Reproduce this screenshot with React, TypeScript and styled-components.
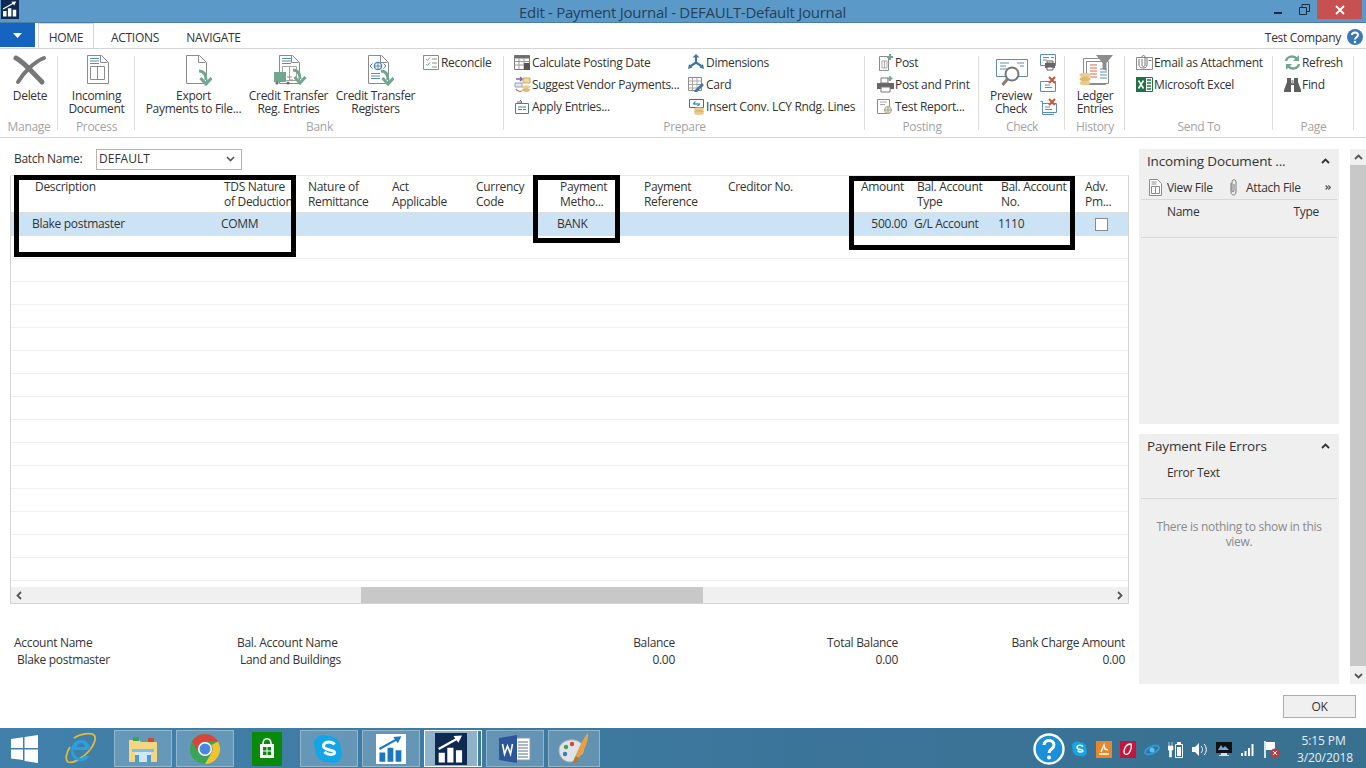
import React from 'react'
import styled, { createGlobalStyle } from 'styled-components'

const GlobalStyle = createGlobalStyle`
  html, body {
    margin: 0;
    padding: 0;
    background: #fff;
    overflow: hidden;
  }
  * {
    box-sizing: border-box;
  }
`

const Screen = styled.div`
  position: relative;
  width: 1366px;
  height: 768px;
  display: flex;
  flex-direction: column;
  overflow: hidden;
  background: #fff;
  color: #333;
  font-family: 'Open Sans', 'Noto Sans', sans-serif;
  font-size: 12px;
  letter-spacing: -0.3px;
`

/* title bar */
const TitleBar = styled.div`
  position: relative;
  height: 23px;
  flex: none;
  display: flex;
  align-items: flex-start;
  justify-content: space-between;
  background: #5b9ac8;
  border-bottom: 1px solid #4a7ea6;
`

const AppBadge = styled.div`
  width: 18px;
  height: 19px;
  margin: 0 0 0 1px;
  background: #0f2a52;
  display: flex;
`

const TitleText = styled.div`
  flex: 1;
  padding: 2px 0 0 0;
  margin-left: 81px;
  text-align: center;
  font-size: 15px;
  line-height: 20px;
  color: #25405a;
  letter-spacing: -0.27px;
`

const WindowButtons = styled.div`
  display: flex;
  align-items: flex-start;
  margin-right: 4px;
`

const WindowButton = styled.div<{ $close?: boolean }>`
  width: ${(p) => (p.$close ? '45px' : '26px')};
  height: 19px;
  display: flex;
  align-items: center;
  justify-content: center;
  background: ${(p) => (p.$close ? '#c75050' : 'transparent')};
`

/* tabs */
const TabBar = styled.div`
  height: 25px;
  flex: none;
  display: flex;
  align-items: flex-end;
  background: #fff;
`

const FileButton = styled.div`
  width: 35px;
  height: 24px;
  margin-bottom: 1px;
  background: #1565c0;
  display: flex;
  align-items: center;
  justify-content: center;
`

const Tab = styled.div<{ $active?: boolean; $w: number }>`
  width: ${(p) => p.$w}px;
  height: 25px;
  text-align: center;
  line-height: 27px;
  color: #333;
  background: #fff;
  border: 1px solid ${(p) => (p.$active ? '#d4d4d4' : 'transparent')};
  border-bottom: none;
  position: relative;
  z-index: 1;
`

const TabSpacer = styled.div`
  width: 3px;
`

const CompanyArea = styled.div`
  margin-left: auto;
  height: 25px;
  display: flex;
  align-items: center;
  gap: 6px;
  padding: 3px 3px 0 0;
`

/* ribbon */
const Ribbon = styled.div`
  height: 90px;
  flex: none;
  display: flex;
  border-top: 1px solid #d4d4d4;
  border-bottom: 1px solid #d4d4d4;
`

const Group = styled.div<{ $w: number }>`
  position: relative;
  width: ${(p) => p.$w}px;
  flex: none;
  display: flex;
  flex-direction: column;
  &::after {
    content: '';
    position: absolute;
    right: 0;
    top: 7px;
    bottom: 7px;
    width: 1px;
    background: #dcdcdc;
  }
`

const GroupBody = styled.div<{ $pad?: number; $gap?: number }>`
  height: 65px;
  flex: none;
  display: flex;
  justify-content: ${(p) => (p.$pad === undefined ? 'center' : 'flex-start')};
  padding-left: ${(p) => p.$pad ?? 0}px;
  gap: ${(p) => p.$gap ?? 0}px;
`

const GroupLabel = styled.div`
  height: 23px;
  flex: none;
  text-align: center;
  color: #a3a3a3;
  line-height: 14px;
  padding-top: 6px;
`

const LargeButton = styled.div<{ $w: number }>`
  width: ${(p) => p.$w}px;
  flex: none;
  padding-top: 3px;
  display: flex;
  flex-direction: column;
  align-items: center;
`

const LargeIcon = styled.svg`
  width: 36px;
  height: 36px;
  flex: none;
  margin-bottom: 1px;
`

const LargeText = styled.div`
  text-align: center;
  line-height: 13px;
  white-space: nowrap;
`

const SmallColumn = styled.div<{ $w?: number }>`
  width: ${(p) => (p.$w ? `${p.$w}px` : 'auto')};
  flex: none;
  padding-top: 3px;
  display: flex;
  flex-direction: column;
`

const SmallItem = styled.div`
  height: 22px;
  flex: none;
  display: flex;
  align-items: center;
  gap: 1px;
  white-space: nowrap;
  line-height: 20px;
  padding-bottom: 1px;
`

const SmallIcon = styled.svg`
  width: 17px;
  height: 17px;
  flex: none;
`

/* workspace */
const Workspace = styled.div`
  flex: 1;
  display: flex;
  flex-direction: column;
  padding-top: 11px;
`

const MainRow = styled.div`
  height: 535px;
  flex: none;
  display: flex;
  padding-left: 10px;
`

const JournalColumn = styled.div`
  width: 1119px;
  flex: none;
`

const BatchRow = styled.div`
  height: 21px;
  display: flex;
  align-items: center;
  margin-bottom: 5px;
  padding-left: 4px;
`

const BatchLabel = styled.div`
  width: 82px;
  padding-bottom: 2px;
`

const BatchSelect = styled.div`
  width: 146px;
  height: 21px;
  border: 1px solid #b4b4b4;
  padding: 0 6px 2px 2px;
  display: flex;
  align-items: center;
  justify-content: space-between;
  letter-spacing: 0;
`

const GridFrame = styled.div`
  height: 429px;
  border: 1px solid #d4d4d4;
  border-top-color: #e8e8e8;
  display: flex;
  flex-direction: column;
`

const columns = '209px 84px 84px 84px 84px 84px 84px 84px 105px 84px 84px 1fr'

const HeaderRow = styled.div`
  height: 37px;
  flex: none;
  display: grid;
  grid-template-columns: ${columns};
  border-bottom: 1px solid #dedede;
`

const HeaderCell = styled.div<{ $right?: boolean; $pad?: number }>`
  padding: 3px ${(p) => (p.$right ? '9px' : '0')} 0 ${(p) => p.$pad ?? 4}px;
  line-height: 15px;
  white-space: pre;
  text-align: ${(p) => (p.$right ? 'right' : 'left')};
`

const DataRow = styled.div<{ $selected?: boolean }>`
  height: 23px;
  flex: none;
  display: grid;
  grid-template-columns: ${columns};
  background: ${(p) => (p.$selected ? '#cce3f5' : '#fff')};
  border-bottom: 1px solid ${(p) => (p.$selected ? '#cce3f5' : '#efefef')};
`

const DataCell = styled.div<{ $right?: boolean; $pad?: number }>`
  padding: 0 ${(p) => (p.$right ? '6px' : '0')} 0 ${(p) => p.$pad ?? 1}px;
  line-height: 22px;
  white-space: nowrap;
  text-align: ${(p) => (p.$right ? 'right' : 'left')};
`

const CheckBox = styled.div`
  width: 13px;
  height: 13px;
  margin: 5px 0 0 14px;
  background: #fff;
  border: 1px solid #8a8a8a;
`

const HScroll = styled.div`
  height: 16px;
  margin-top: auto;
  flex: none;
  display: flex;
  align-items: center;
  justify-content: space-between;
  background: #f0f0f0;
  padding: 0 4px;
  position: relative;
`

const HThumb = styled.div`
  position: absolute;
  left: 350px;
  top: 0;
  width: 342px;
  height: 16px;
  background: #c8c8c8;
`

const TotalsRow = styled.div`
  margin: 30px 0 0 4px;
  width: 1111px;
  display: grid;
  grid-template-columns: 223px 200px 238px 223px 227px;
  line-height: 17px;
`

const TotalLabel = styled.div<{ $right?: boolean }>`
  text-align: ${(p) => (p.$right ? 'right' : 'left')};
  white-space: nowrap;
`

const TotalValue = styled.div<{ $right?: boolean }>`
  text-align: ${(p) => (p.$right ? 'right' : 'left')};
  padding-left: ${(p) => (p.$right ? '0' : '3px')};
  white-space: nowrap;
`

const SideColumn = styled.div`
  width: 200px;
  flex: none;
  margin-left: 10px;
  display: flex;
  flex-direction: column;
  gap: 10px;
`

const FactBox = styled.div<{ $h: number }>`
  height: ${(p) => p.$h}px;
  flex: none;
  background: #efefef;
  display: flex;
  flex-direction: column;
`

const FactTitle = styled.div`
  height: 25px;
  flex: none;
  padding: 0 9px 1px 8px;
  display: flex;
  align-items: center;
  justify-content: space-between;
  font-size: 13.5px;
  letter-spacing: -0.15px;
`

const FactToolbar = styled.div`
  height: 26px;
  flex: none;
  margin: 0 2px;
  padding: 1px 6px 0 6px;
  display: flex;
  align-items: center;
  border-bottom: 1px solid #d8d8d8;
`

const ToolItem = styled.div<{ $gap: number; $w: number }>`
  width: ${(p) => p.$w}px;
  flex: none;
  display: flex;
  align-items: center;
  gap: ${(p) => p.$gap}px;
`

const FactColumns = styled.div<{ $h: number; $top: number }>`
  height: ${(p) => p.$h}px;
  flex: none;
  margin: 0 2px;
  padding: ${(p) => p.$top}px 18px 0 26px;
  display: flex;
  justify-content: space-between;
  line-height: 16px;
  border-bottom: 1px solid #d8d8d8;
`

const EmptyNote = styled.div`
  padding: 20px 12px 0;
  text-align: center;
  line-height: 15px;
  color: #8a8a8a;
`

const VScroll = styled.div`
  width: 16px;
  flex: none;
  margin-left: 11px;
  background: #f0f0f0;
  display: flex;
  flex-direction: column;
  align-items: center;
  justify-content: space-between;
  position: relative;
  padding: 4px 0;
`

const VThumb = styled.div`
  position: absolute;
  left: 0;
  top: 16px;
  bottom: 18px;
  width: 16px;
  background: #c8c8c8;
`

const ActionBar = styled.div`
  display: flex;
  justify-content: flex-end;
  padding: 11px 10px 0 0;
`

const OkButton = styled.div`
  width: 73px;
  height: 23px;
  background: #f0f0f0;
  border: 1px solid #adadad;
  text-align: center;
  line-height: 21px;
`

/* taskbar */
const Taskbar = styled.div`
  height: 40px;
  flex: none;
  display: flex;
  align-items: stretch;
  justify-content: space-between;
  padding-top: 2px;
  background: linear-gradient(90deg, #4080aa 0%, #3f7ca3 30%, #3b7499 60%, #38708f 100%);
  color: #e6eef4;
`

const TaskStrip = styled.div`
  display: flex;
  gap: 4px;
`

const TaskSlot = styled.div<{ $w?: number; $tile?: boolean; $active?: boolean }>`
  width: ${(p) => p.$w ?? 58}px;
  height: 37px;
  display: flex;
  align-items: center;
  justify-content: center;
  background: ${(p) =>
    p.$active ? 'rgba(255,255,255,0.42)' : p.$tile ? 'rgba(255,255,255,0.2)' : 'transparent'};
  border: 1px solid
    ${(p) => (p.$active ? 'rgba(255,255,255,0.9)' : p.$tile ? 'rgba(255,255,255,0.3)' : 'transparent')};
`

const TaskGhost = styled.div`
  width: 4px;
  height: 37px;
  margin-left: -4px;
  border: 1px solid rgba(255, 255, 255, 0.9);
  border-left: none;
`

const Tray = styled.div`
  display: flex;
  align-items: center;
  padding-right: 16px;
`

const TrayIcons = styled.div`
  display: flex;
  align-items: center;
  gap: 8px;
  margin: 0 17px 0 7px;
`

const Clock = styled.div`
  width: 53px;
  text-align: center;
  line-height: 17px;
  letter-spacing: -0.1px;
`

const Annotation = styled.div<{ $x: number; $y: number; $w: number; $h: number }>`
  position: absolute;
  left: ${(p) => p.$x}px;
  top: ${(p) => p.$y}px;
  width: ${(p) => p.$w}px;
  height: ${(p) => p.$h}px;
  border: 5px solid #000;
  pointer-events: none;
`

/* drawn icons */
const PageOutline = ({ x, y, w = 20, h = 28 }: { x: number; y: number; w?: number; h?: number }) => (
  <path
    d={`M${x + 0.5} ${y + 0.5}h${w - 7}l7 7v${h - 7}h-${w}z M${x + w - 7.5} ${y + 0.5}v7h7`}
    fill="#fff"
    stroke="#8b8b8b"
  />
)

const GreenArrow = ({ x, y }: { x: number; y: number }) => (
  <g fill="none" stroke="#6fa78f" strokeWidth="3">
    <path d={`M${x} ${y}c5 0 7 3 7 9`} />
    <path d={`M${x + 1.5} ${y + 7}l5.5 6 5.5-6`} />
  </g>
)

const DocLines = ({ x, y, n = 3, w = 9 }: { x: number; y: number; n?: number; w?: number }) => (
  <g stroke="#5b8db8">
    {Array.from({ length: n }).map((_, i) => (
      <path key={i} d={`M${x} ${y + i * 2.5 + 0.5}h${w}`} />
    ))}
  </g>
)

const DeleteIcon = () => (
  <LargeIcon viewBox="0 0 36 36">
    <path d="M4 6c8 4 18 16 26 24" fill="none" stroke="#777" strokeWidth="5" strokeLinecap="round" />
    <path d="M32 6C22 10 12 20 6 30" fill="none" stroke="#777" strokeWidth="4" strokeLinecap="round" />
  </LargeIcon>
)

const IncomingIcon = () => (
  <LargeIcon viewBox="0 0 36 36">
    <PageOutline x={8} y={3} w={21} h={28} />
    <DocLines x={11} y={6} n={3} w={9} />
    <path d="M11.5 14.5h14v13h-14z M18.5 14.5v13" fill="none" stroke="#8b8b8b" />
  </LargeIcon>
)

const ExportIcon = () => (
  <LargeIcon viewBox="0 0 36 36">
    <PageOutline x={10} y={3} w={20} h={28} />
    <GreenArrow x={23} y={19} />
  </LargeIcon>
)

const CreditEntriesIcon = () => (
  <LargeIcon viewBox="0 0 36 36">
    <PageOutline x={8} y={3} w={20} h={28} />
    <DocLines x={11} y={6} n={3} w={9} />
    <path d="M11.5 14.5h14v14h-14z M18.5 14.5v14" fill="none" stroke="#a5a5a5" />
    <path d="M3 20h12v10H3z" fill="#6fa78f" />
    <circle cx="6" cy="31" r="1.6" fill="#6e6e6e" />
    <circle cx="17" cy="31" r="1.6" fill="#6e6e6e" />
    <path d="M16 25h5M18 28h4" stroke="#8b8b8b" />
    <GreenArrow x={22} y={18} />
  </LargeIcon>
)

const CreditRegistersIcon = () => (
  <LargeIcon viewBox="0 0 36 36">
    <PageOutline x={10} y={3} w={20} h={28} />
    <circle cx="20" cy="14" r="3.6" fill="#fff" stroke="#4a86b8" strokeWidth="1.4" />
    <path d="M16.5 14h7M20 10.5v7" stroke="#4a86b8" />
    <path d="M14.5 11.5l-2.5 2.5 2.5 2.5M25.5 11.5l2.5 2.5-2.5 2.5" fill="none" stroke="#5b7fa0" />
    <DocLines x={13} y={21} n={3} w={9} />
    <GreenArrow x={23} y={19} />
  </LargeIcon>
)

const PreviewCheckIcon = () => (
  <LargeIcon viewBox="0 0 36 36">
    <path d="M3.5 7.5h31v17h-31z" fill="#fff" stroke="#5b8db8" />
    <path d="M7 11h9M7 14h6M7 17h7M24 11h7M27 14h4" stroke="#5b8db8" />
    <circle cx="19" cy="22" r="6.5" fill="#fff" stroke="#777" strokeWidth="2" />
    <path d="M14.5 27l-5 6" stroke="#8a7d68" strokeWidth="3" />
  </LargeIcon>
)

const LedgerIcon = () => (
  <LargeIcon viewBox="0 0 36 36">
    <path d="M6.5 6.5h22v26h-22z" fill="#fff" stroke="#8b8b8b" />
    <path d="M9.5 9.5h22v22h-22z" fill="#fff" stroke="#8b8b8b" />
    <path d="M13 13h7M13 16h7M13 19h7M13 22h7M13 25h7" stroke="#cf6f4c" />
    <path d="M23 17h7M23 20h7M23 23h7M23 26h7" stroke="#5b8db8" />
    <path d="M19 3h17l-6.5 8v8l-4-2v-6z" fill="#8d8d8d" />
    <ellipse cx="8" cy="23" rx="5.5" ry="2.3" fill="#e8cb8d" />
    <ellipse cx="8" cy="27" rx="5.5" ry="2.3" fill="#dcb970" />
    <ellipse cx="8" cy="31" rx="5.5" ry="2.3" fill="#e8cb8d" />
  </LargeIcon>
)

const ReconcileIcon = () => (
  <SmallIcon viewBox="0 0 17 17">
    <path d="M.5 1.5h15v14H.5z" fill="#fff" stroke="#8b8b8b" />
    <path d="M3 5l1.5 1.5L7 3.5M3 10l1.5 1.5L7 8.5" fill="none" stroke="#6fa78f" />
    <path d="M9 5h5M9 9h5M9 13h5" stroke="#8b8b8b" />
  </SmallIcon>
)

const CalendarIcon = () => (
  <SmallIcon viewBox="0 0 17 17">
    <path d="M.5 1.5h15v14H.5z" fill="#fff" stroke="#7a7a7a" />
    <path d="M.5 1.5h15v3H.5z" fill="#6e6e6e" />
    <path d="M.5 7.5h15M.5 11h15M5 4v11M10 4v11" stroke="#9a9a9a" />
    <path d="M10 9h6v7h-6z" fill="#555" />
  </SmallIcon>
)

const SuggestIcon = () => (
  <SmallIcon viewBox="0 0 17 17">
    <path d="M2 3h6M6 1l2.5 2L6 5" fill="none" stroke="#8a5fa8" strokeWidth="1.3" />
    <path d="M9 2h7v5H9z" fill="#f0d8a4" stroke="#c8a868" />
    <path d="M1 7h7v4H1z" fill="#dfe7ef" stroke="#8aa7c2" />
    <ellipse cx="12" cy="11" rx="4" ry="1.8" fill="#e8cb8d" />
    <ellipse cx="12" cy="14" rx="4" ry="1.8" fill="#dcb970" />
    <path d="M2 13c1 2 3 3 6 2" fill="none" stroke="#cf6f4c" strokeWidth="1.3" />
  </SmallIcon>
)

const ApplyIcon = () => (
  <SmallIcon viewBox="0 0 17 17">
    <path d="M1.5 5.5h13v10h-13z" fill="#fff" stroke="#4c7f9f" />
    <path d="M4 9h8M4 11.5h4M9 11.5h3" stroke="#4c7f9f" />
    <path d="M3 4h5M6 2l2 2-2 2" fill="none" stroke="#6e6e6e" />
  </SmallIcon>
)

const DimensionsIcon = () => (
  <SmallIcon viewBox="0 0 17 17">
    <path d="M8 8.5V2M8 8.5l-6 4M8 8.5l6 4" stroke="#3f78a8" strokeWidth="2.2" />
    <path d="M8 0l3.5 3.5h-7zM0 15l1-5 3.5 3.5zM16 15l-1-5-3.5 3.5z" fill="#3f78a8" />
  </SmallIcon>
)

const CardIcon = () => (
  <SmallIcon viewBox="0 0 17 17">
    <path d="M.5 1.5h13v13H.5z" fill="#fff" stroke="#8b8b8b" />
    <path d="M.5 5h13M.5 8.5h13M.5 12h13M4.5 2v12M9 2v12" stroke="#a8a8a8" />
    <path d="M7 14l7-7 2 2-7 7H6z" fill="#3f78a8" />
  </SmallIcon>
)

const ConvIcon = () => (
  <SmallIcon viewBox="0 0 17 17">
    <path d="M1.5 1.5h14v8h-14z" fill="#fff" stroke="#3f6f94" />
    <path d="M5 6h7M5 6l2.5-2.5M12 6L9.5 8" fill="none" stroke="#3f9ac0" strokeWidth="1.3" />
    <ellipse cx="11" cy="11" rx="5" ry="1.8" fill="#e8cb8d" />
    <ellipse cx="11" cy="13.5" rx="5" ry="1.8" fill="#dcb970" />
    <ellipse cx="11" cy="15.5" rx="5" ry="1.4" fill="#e8cb8d" />
  </SmallIcon>
)

const PostIcon = () => (
  <SmallIcon viewBox="0 0 17 17">
    <path d="M2.5 2.5h9v14h-9z" fill="#fff" stroke="#8b8b8b" />
    <path d="M5 7h5v7H5zM7.5 7v7" fill="none" stroke="#a8a8a8" />
    <path d="M13 0v6M10 3h6" stroke="#6fa78f" strokeWidth="2" />
  </SmallIcon>
)

const PostPrintIcon = () => (
  <SmallIcon viewBox="0 0 17 17">
    <path d="M0 7h17v6H0z" fill="#666" />
    <path d="M4 2h7v5H4zM4 11h9v5H4z" fill="#fff" stroke="#777" />
    <path d="M13 0v5M10.5 2.5h5" stroke="#6fa78f" strokeWidth="1.8" />
  </SmallIcon>
)

const TestReportIcon = () => (
  <SmallIcon viewBox="0 0 17 17">
    <path d="M.5 1.5h12v14H.5z" fill="#fff" stroke="#8b8b8b" />
    <path d="M3 4h7M3 6.5h5" stroke="#a8a8a8" />
    <circle cx="11" cy="12" r="3.5" fill="#f4e4c0" stroke="#c8a868" />
    <path d="M11 8v8M7 12h8" stroke="#8aa7c2" />
  </SmallIcon>
)

const CheckPrintIcon = () => (
  <SmallIcon viewBox="0 0 17 17">
    <path d="M.5 .5h15v11H.5z" fill="#fff" stroke="#5b8db8" />
    <path d="M3 3.5h6M3 6h4M11 3.5h3" stroke="#5b8db8" />
    <path d="M5 9h10v5H5z" fill="#666" />
    <path d="M7 7h6v2H7zM7 13h6v3H7z" fill="#fff" stroke="#666" />
  </SmallIcon>
)

const CheckVoidIcon = ({ stacked }: { stacked?: boolean }) => (
  <SmallIcon viewBox="0 0 17 17">
    {stacked && <path d="M.5 3.5h2v13h11v-1" fill="none" stroke="#5b8db8" />}
    <path d={stacked ? 'M2.5 5.5h14v9h-14z' : 'M.5 5.5h15v10H.5z'} fill="#fff" stroke="#5b8db8" />
    <path d="M5 9h5M5 11.5h7" stroke="#5b8db8" />
    <path d="M9 1l6 6M15 1L9 7" stroke="#c9573a" strokeWidth="2" />
  </SmallIcon>
)

const AttachmentIcon = () => (
  <SmallIcon viewBox="0 0 17 17">
    <path d="M.5 3.5h16v12H.5z" fill="#fff" stroke="#8b8b8b" />
    <path d="M6 5v6c0 2 3 2 3 0V3c0-2-3-2-3 0M3 5v6c0 4 8 4 8 0V4" fill="none" stroke="#777" />
    <path d="M12.5 6.5h3" stroke="#777" />
  </SmallIcon>
)

const ExcelIcon = () => (
  <SmallIcon viewBox="0 0 17 17">
    <path d="M8 1.5h8.5v14H8z" fill="#fff" stroke="#1f7244" />
    <path d="M11 4h4M11 7h4M11 10h4M11 13h4" stroke="#1f7244" strokeWidth="1.5" />
    <path d="M0 1h10v15H0z" fill="#1f7244" />
    <path d="M2.5 4.5l5 8M7.5 4.5l-5 8" stroke="#fff" strokeWidth="1.6" />
  </SmallIcon>
)

const RefreshIcon = () => (
  <SmallIcon viewBox="0 0 17 17">
    <path d="M2 7c1-5 8-6 11-2" fill="none" stroke="#6fa78f" strokeWidth="2.4" />
    <path d="M15 1v6H9z" fill="#6fa78f" />
    <path d="M15 10c-1 5-8 6-11 2" fill="none" stroke="#6fa78f" strokeWidth="2.4" />
    <path d="M2 16v-6h6z" fill="#6fa78f" />
  </SmallIcon>
)

const BinocularsIcon = () => (
  <SmallIcon viewBox="0 0 17 17">
    <path d="M3 2h4v5h3V2h4v4l3 8v2h-7V9H7v7H0v-2l3-8z" fill="#5f5f5f" />
    <path d="M7.5 4h2v4h-2z" fill="#9a9a9a" />
  </SmallIcon>
)

const ChevronUp = () => (
  <svg width="9" height="6" viewBox="0 0 9 6">
    <path d="M1 5l3.5-3.5L8 5" fill="none" stroke="#333" strokeWidth="1.8" />
  </svg>
)

const Arrow = ({ d }: { d: string }) => (
  <svg width="9" height="9" viewBox="0 0 9 9">
    <path d={d} fill="none" stroke="#555" strokeWidth="1.8" />
  </svg>
)

const SelectChevron = () => (
  <svg width="9" height="6" viewBox="0 0 9 6">
    <path d="M1 1l3.5 3.5L8 1" fill="none" stroke="#555" strokeWidth="1.6" />
  </svg>
)

const ViewFileIcon = () => (
  <SmallIcon viewBox="0 0 17 17">
    <path d="M2.5 .5h8l4 4v12h-12z" fill="#fff" stroke="#8b8b8b" />
    <path d="M4.5 3h5M4.5 5h5" stroke="#8b8b8b" />
    <path d="M4.5 7.5h8v7h-8zM8.5 7.5v7" fill="none" stroke="#8b8b8b" />
  </SmallIcon>
)

const PaperclipIcon = () => (
  <SmallIcon viewBox="0 0 17 17">
    <path d="M6 4v9c0 4 5 4 5 0V3c0-3-4-3-4 0v9c0 1 2 1 2 0V5" fill="none" stroke="#7a7a7a" />
  </SmallIcon>
)

const NavChart = ({ dark, size = 26 }: { dark?: boolean; size?: number }) => (
  <svg width={size} height={size} viewBox="0 0 26 26">
    <path d="M0 0h26v26H0z" fill={dark ? '#0f2a52' : '#fff'} />
    <path d="M3 16h5v8H3zM10 12h5v12h-5zM17 14h5v10h-5z" fill={dark ? '#fff' : '#1a78c2'} />
    <path d="M3 13L19 4" stroke={dark ? '#fff' : '#1a78c2'} strokeWidth="1.8" />
    <path d="M15 2.5l7-.5-3 6z" fill={dark ? '#fff' : '#1a78c2'} />
  </svg>
)

const WindowsLogo = () => (
  <svg width="27" height="28" viewBox="0 0 27 28">
    <path d="M0 4l12-1.7V13H0zM13.500 2L27 0v13H13.500zM0 14.500h12V25L0 23.500zM13.500 14.500H27V28l-13.500-2z" fill="#fff" />
  </svg>
)

const IeLogo = () => (
  <svg width="32" height="34" viewBox="0 0 32 34">
    <path d="M9 6C16 1 26 1 29 3c3 3 0 10-5 16-6 7-16 13-21 11-3-2-2-9 2-15" fill="none" stroke="#e3b93a" strokeWidth="1.8" />
    <path d="M8 18h17c0-7-4-10-9-10-6 0-10 5-10 11s4 10 10 10c4 0 7-2 8-5h-5c-1 1-2 2-4 2-3 0-6-3-7-8z M12 15c0-2 2-4 4-4s4 2 4 4z" fill="#2aa0df" fillRule="evenodd" />
  </svg>
)

const ExplorerLogo = () => (
  <svg width="30" height="30" viewBox="0 0 30 30">
    <path d="M1 6h10l2 2h16v20H1z" fill="#f2d680" />
    <path d="M5 3h6v4H5z" fill="#3aa655" />
    <path d="M20 4h6v4h-6z" fill="#d04a3a" />
    <path d="M4 15h22v3H4z" fill="#7cc0e8" />
    <path d="M7 18h16v10H7z" fill="#cfe6f5" />
    <path d="M7 21h4v7H7zM19 21h4v7h-4z" fill="#4a9ad4" />
  </svg>
)

const ChromeLogo = () => (
  <svg width="32" height="32" viewBox="0 0 32 32">
    <circle cx="16" cy="16" r="15" fill="#3aa655" />
    <path d="M16 1a15 15 0 0 1 13 7.5H16a7.5 7.5 0 0 0-6.5 11.2L3 8.5A15 15 0 0 1 16 1z" fill="#d9453a" />
    <path d="M29 8.5A15 15 0 0 1 16 31l6.5-11.3A7.5 7.5 0 0 0 22.5 12z" fill="#f3c32f" />
    <circle cx="16" cy="16" r="7" fill="#fff" />
    <circle cx="16" cy="16" r="5.5" fill="#4a86e0" />
  </svg>
)

const StoreLogo = () => (
  <svg width="30" height="34" viewBox="0 0 30 34">
    <path d="M0 0h30v34H0z" fill="#0a8a0a" />
    <path d="M8 12h14v14H8z" fill="#fff" />
    <path d="M11 12c0-7 8-7 8 0" fill="none" stroke="#fff" strokeWidth="1.6" />
    <path d="M11 15h3.5v3.5H11zM15.500 15H19v3.5h-3.5zM11 19.500h3.5V23H11zM15.500 19.500H19V23h-3.5z" fill="#0a8a0a" />
  </svg>
)

const SkypeLogo = ({ size = 30 }: { size?: number }) => (
  <svg width={size} height={size} viewBox="0 0 30 30">
    <path d="M9 1c2 0 3 .5 4 1 8-1 15 6 14 14 .5 1 1 2 1 4 0 5-4 9-9 9-2 0-3-.5-4-1C7 29 0 22 1 14c-.5-1-1-2-1-4 0-5 4-9 9-9z" fill="#12a5e8" />
    <path d="M20.5 10.5C19 8.5 17 8 15 8c-3 0-5.5 1.5-5.5 4 0 5 11 3 11 6.500 0 1.500-2 2-4.500 2-2 0-4-1-5.500-2.500" fill="none" stroke="#fff" strokeWidth="3" />
  </svg>
)

const WordLogo = () => (
  <svg width="32" height="28" viewBox="0 0 32 28">
    <path d="M12 3h19v22H12z" fill="#fff" stroke="#8a9ab0" />
    <path d="M19 7h10M19 10h10M19 13h10M19 16h10M19 19h10M19 22h10" stroke="#5a6f8a" />
    <path d="M0 3l18-3v28L0 25z" fill="#2b579a" />
    <path d="M3.5 9l2 10 3-8 3 8 2-10" fill="none" stroke="#fff" strokeWidth="1.6" />
  </svg>
)

const PaintLogo = () => (
  <svg width="34" height="34" viewBox="0 0 34 34">
    <path d="M2 18c0-7 8-11 15-10 7 1 11 6 9 12-1 4-5 3-7 4-2 2-1 6-6 6C7 30 2 25 2 18z" fill="#dfe3e6" stroke="#aab2b8" />
    <circle cx="9" cy="15" r="2.2" fill="#4aa04a" />
    <circle cx="15" cy="12" r="2.2" fill="#d04a3a" />
    <circle cx="8" cy="22" r="2.2" fill="#3a78c8" />
    <path d="M31 1c1 5-2 16-10 26l-3-2C22 16 26 6 31 1z" fill="#e8a040" />
    <path d="M19 24l3 2c-1 3-3 6-7 6 2-2 2-6 4-8z" fill="#b07a3a" />
  </svg>
)

const TrayIcon = styled.svg`
  width: 16px;
  height: 17px;
  flex: none;
`

const HelpRing = () => (
  <svg width="32" height="32" viewBox="0 0 32 32">
    <circle cx="16" cy="16" r="14.5" fill="#1b8fd8" stroke="#fff" strokeWidth="2.4" />
    <path d="M11 12c0-6 10-6 10 0 0 4-5 4-5 8" fill="none" stroke="#fff" strokeWidth="3" />
    <circle cx="16" cy="24.5" r="2" fill="#fff" />
  </svg>
)

const HelpBadge = () => (
  <svg width="16" height="16" viewBox="0 0 16 16">
    <circle cx="8" cy="8" r="8" fill="#3a78b8" />
    <path d="M5 6c0-3.5 6-3.5 6 0 0 2.5-3 2-3 4.5" fill="none" stroke="#fff" strokeWidth="2" />
    <circle cx="8" cy="13" r="1.2" fill="#fff" />
  </svg>
)

const ribbonGroups = {
  prepare1: [
    { label: 'Calculate Posting Date', icon: <CalendarIcon /> },
    { label: 'Suggest Vendor Payments...', icon: <SuggestIcon /> },
    { label: 'Apply Entries...', icon: <ApplyIcon /> },
  ],
  prepare2: [
    { label: 'Dimensions', icon: <DimensionsIcon /> },
    { label: 'Card', icon: <CardIcon /> },
    { label: 'Insert Conv. LCY Rndg. Lines', icon: <ConvIcon /> },
  ],
  posting: [
    { label: 'Post', icon: <PostIcon /> },
    { label: 'Post and Print', icon: <PostPrintIcon /> },
    { label: 'Test Report...', icon: <TestReportIcon /> },
  ],
  sendTo: [
    { label: 'Email as Attachment', icon: <AttachmentIcon /> },
    { label: 'Microsoft Excel', icon: <ExcelIcon /> },
  ],
  page: [
    { label: 'Refresh', icon: <RefreshIcon /> },
    { label: 'Find', icon: <BinocularsIcon /> },
  ],
}

const SmallList = ({ items }: { items: { label: string; icon: React.ReactNode }[] }) => (
  <>
    {items.map((item) => (
      <SmallItem key={item.label}>
        {item.icon}
        {item.label}
      </SmallItem>
    ))}
  </>
)

const headers = [
  { text: 'Description', pad: 24 },
  { text: 'TDS Nature\nof Deduction' },
  { text: 'Nature of\nRemittance' },
  { text: 'Act\nApplicable' },
  { text: 'Currency\nCode' },
  { text: 'Payment\nMetho...' },
  { text: 'Payment\nReference' },
  { text: 'Creditor No.' },
  { text: 'Amount', right: true },
  { text: 'Bal. Account\nType' },
  { text: 'Bal. Account\nNo.' },
  { text: 'Adv.\nPm...' },
]

const selectedRow = ['Blake postmaster', 'COMM', '', '', '', 'BANK', '', '', '500.00', 'G/L Account', '1110']

const totals = [
  { label: 'Account Name', value: 'Blake postmaster' },
  { label: 'Bal. Account Name', value: 'Land and Buildings' },
  { label: 'Balance', value: '0.00', right: true },
  { label: 'Total Balance', value: '0.00', right: true },
  { label: 'Bank Charge Amount', value: '0.00', right: true },
]

export default function App() {
  return (
    <Screen>
      <GlobalStyle />
      <TitleBar>
        <AppBadge>
          <NavChart dark size={18} />
        </AppBadge>
        <TitleText>Edit - Payment Journal - DEFAULT-Default Journal</TitleText>
        <WindowButtons>
          <WindowButton>
            <svg width="10" height="10" viewBox="0 0 10 10">
              <path d="M1 8h8" stroke="#1c2c3c" strokeWidth="2" />
            </svg>
          </WindowButton>
          <WindowButton>
            <svg width="11" height="11" viewBox="0 0 11 11">
              <path d="M.5 3.5h7v7h-7zM3 3V.5h7.5v7H8" fill="none" stroke="#1c2c3c" />
            </svg>
          </WindowButton>
          <WindowButton $close>
            <svg width="10" height="10" viewBox="0 0 10 10">
              <path d="M1 1l8 8M9 1L1 9" stroke="#fff" strokeWidth="1.8" />
            </svg>
          </WindowButton>
        </WindowButtons>
      </TitleBar>

      <TabBar>
        <FileButton>
          <svg width="9" height="5" viewBox="0 0 9 5">
            <path d="M0 0h9L4.5 5z" fill="#fff" />
          </svg>
        </FileButton>
        <TabSpacer />
        <Tab $active $w={56}>HOME</Tab>
        <Tab $w={82}>ACTIONS</Tab>
        <Tab $w={75}>NAVIGATE</Tab>
        <CompanyArea>
          Test Company
          <HelpBadge />
        </CompanyArea>
      </TabBar>

      <Ribbon>
        <Group $w={58}>
          <GroupBody $pad={5}>
            <LargeButton $w={50}>
              <DeleteIcon />
              <LargeText>Delete</LargeText>
            </LargeButton>
          </GroupBody>
          <GroupLabel>Manage</GroupLabel>
        </Group>
        <Group $w={77}>
          <GroupBody>
            <LargeButton $w={70}>
              <IncomingIcon />
              <LargeText>Incoming<br />Document</LargeText>
            </LargeButton>
          </GroupBody>
          <GroupLabel>Process</GroupLabel>
        </Group>
        <Group $w={369}>
          <GroupBody $pad={11} $gap={8}>
            <LargeButton $w={95}>
              <ExportIcon />
              <LargeText>Export<br />Payments to File...</LargeText>
            </LargeButton>
            <LargeButton $w={79}>
              <CreditEntriesIcon />
              <LargeText>Credit Transfer<br />Reg. Entries</LargeText>
            </LargeButton>
            <LargeButton $w={79}>
              <CreditRegistersIcon />
              <LargeText>Credit Transfer<br />Registers</LargeText>
            </LargeButton>
            <SmallColumn>
              <SmallItem>
                <ReconcileIcon />
                Reconcile
              </SmallItem>
            </SmallColumn>
          </GroupBody>
          <GroupLabel>Bank</GroupLabel>
        </Group>
        <Group $w={361}>
          <GroupBody $pad={10}>
            <SmallColumn $w={174}>
              <SmallList items={ribbonGroups.prepare1} />
            </SmallColumn>
            <SmallColumn>
              <SmallList items={ribbonGroups.prepare2} />
            </SmallColumn>
          </GroupBody>
          <GroupLabel>Prepare</GroupLabel>
        </Group>
        <Group $w={114}>
          <GroupBody $pad={12}>
            <SmallColumn>
              <SmallList items={ribbonGroups.posting} />
            </SmallColumn>
          </GroupBody>
          <GroupLabel>Posting</GroupLabel>
        </Group>
        <Group $w={86}>
          <GroupBody $pad={7} $gap={4}>
            <LargeButton $w={50}>
              <PreviewCheckIcon />
              <LargeText>Preview<br />Check</LargeText>
            </LargeButton>
            <SmallColumn>
              <SmallItem><CheckPrintIcon /></SmallItem>
              <SmallItem><CheckVoidIcon /></SmallItem>
              <SmallItem><CheckVoidIcon stacked /></SmallItem>
            </SmallColumn>
          </GroupBody>
          <GroupLabel>Check</GroupLabel>
        </Group>
        <Group $w={60}>
          <GroupBody>
            <LargeButton $w={50}>
              <LedgerIcon />
              <LargeText>Ledger<br />Entries</LargeText>
            </LargeButton>
          </GroupBody>
          <GroupLabel>History</GroupLabel>
        </Group>
        <Group $w={148}>
          <GroupBody $pad={11}>
            <SmallColumn>
              <SmallList items={ribbonGroups.sendTo} />
            </SmallColumn>
          </GroupBody>
          <GroupLabel>Send To</GroupLabel>
        </Group>
        <Group $w={81}>
          <GroupBody $pad={11}>
            <SmallColumn>
              <SmallList items={ribbonGroups.page} />
            </SmallColumn>
          </GroupBody>
          <GroupLabel>Page</GroupLabel>
        </Group>
      </Ribbon>

      <Workspace>
        <MainRow>
          <JournalColumn>
            <BatchRow>
              <BatchLabel>Batch Name:</BatchLabel>
              <BatchSelect>
                DEFAULT
                <SelectChevron />
              </BatchSelect>
            </BatchRow>
            <GridFrame>
              <HeaderRow>
                {headers.map((h) => (
                  <HeaderCell key={h.text} $right={h.right} $pad={h.pad}>
                    {h.text}
                  </HeaderCell>
                ))}
              </HeaderRow>
              <DataRow $selected>
                {selectedRow.map((value, i) => (
                  <DataCell key={i} $right={i === 8} $pad={i === 0 ? 21 : undefined}>
                    {value}
                  </DataCell>
                ))}
                <CheckBox />
              </DataRow>
              {Array.from({ length: 15 }).map((_, i) => (
                <DataRow key={i} />
              ))}
              <HScroll>
                <HThumb />
                <Arrow d="M6 1L2.5 4.5 6 8" />
                <Arrow d="M3 1l3.5 3.5L3 8" />
              </HScroll>
            </GridFrame>
            <TotalsRow>
              {totals.map((t) => (
                <TotalLabel key={t.label} $right={t.right}>{t.label}</TotalLabel>
              ))}
              {totals.map((t) => (
                <TotalValue key={t.label} $right={t.right}>{t.value}</TotalValue>
              ))}
            </TotalsRow>
          </JournalColumn>

          <SideColumn>
            <FactBox $h={275}>
              <FactTitle>
                Incoming Document ...
                <ChevronUp />
              </FactTitle>
              <FactToolbar>
                <ToolItem $w={78} $gap={3}>
                  <ViewFileIcon />
                  View File
                </ToolItem>
                <ToolItem $w={100} $gap={4}>
                  <PaperclipIcon />
                  Attach File
                </ToolItem>
                <Arrow d="M1 1.5l3 3-3 3M5 1.5l3 3-3 3" />
              </FactToolbar>
              <FactColumns $h={38} $top={4}>
                <span>Name</span>
                <span>Type</span>
              </FactColumns>
            </FactBox>
            <FactBox $h={250}>
              <FactTitle>
                Payment File Errors
                <ChevronUp />
              </FactTitle>
              <FactColumns $h={40} $top={6}>
                <span>Error Text</span>
              </FactColumns>
              <EmptyNote>There is nothing to show in this view.</EmptyNote>
            </FactBox>
          </SideColumn>

          <VScroll>
            <VThumb />
            <Arrow d="M1 6l3.5-3.5L8 6" />
            <Arrow d="M1 3l3.5 3.5L8 3" />
          </VScroll>
        </MainRow>

        <ActionBar>
          <OkButton>OK</OkButton>
        </ActionBar>
      </Workspace>

      <Taskbar>
        <TaskStrip>
          <TaskSlot $w={48}><WindowsLogo /></TaskSlot>
          <TaskSlot><IeLogo /></TaskSlot>
          <TaskSlot $tile><ExplorerLogo /></TaskSlot>
          <TaskSlot $tile><ChromeLogo /></TaskSlot>
          <TaskSlot><StoreLogo /></TaskSlot>
          <TaskSlot $tile><SkypeLogo /></TaskSlot>
          <TaskSlot $tile><NavChart size={30} /></TaskSlot>
          <TaskSlot $w={54} $active><NavChart dark size={32} /></TaskSlot>
          <TaskGhost />
          <TaskSlot $tile><WordLogo /></TaskSlot>
          <TaskSlot $w={52} $tile><PaintLogo /></TaskSlot>
        </TaskStrip>
        <Tray>
          <HelpRing />
          <TrayIcons>
            <SkypeLogo size={16} />
            <TrayIcon viewBox="0 0 16 17">
              <path d="M0 0h16v17H0z" fill="#e8862a" />
              <path d="M3 13h10M5 11l3-7 1 4 3 1" fill="none" stroke="#fff" strokeWidth="1.4" />
            </TrayIcon>
            <TrayIcon viewBox="0 0 16 17">
              <path d="M0 0h16v17H0z" fill="#c8143c" />
              <path d="M10 3C6 3 4 8 4 11c0 3 3 3 5 1 2-3 3-6 2-9z" fill="none" stroke="#fff" strokeWidth="1.4" />
            </TrayIcon>
            <TrayIcon viewBox="0 0 16 17">
              <ellipse cx="8" cy="9" rx="7.5" ry="3.5" fill="none" stroke="#2a9ad8" strokeWidth="2" transform="rotate(-25 8 9)" />
              <circle cx="8" cy="9" r="2.5" fill="#5ac0f0" />
            </TrayIcon>
            <TrayIcon viewBox="0 0 16 17">
              <path d="M1 1v4M4 1v4M0 5h5v4H3.5v7h-2V9H0z" fill="#fff" stroke="#fff" strokeWidth=".6" />
              <path d="M7.5 3.5h7v13h-7z" fill="none" stroke="#fff" />
              <path d="M9 1h4v2H9z" fill="#fff" />
              <path d="M9 6h4v9H9z" fill="#fff" />
            </TrayIcon>
            <TrayIcon viewBox="0 0 16 17">
              <path d="M0 6h3l4-4v13l-4-4H0z" fill="#fff" />
              <path d="M9 5c2 2 2 5 0 7M12 3c3 3 3 8 0 11" fill="none" stroke="#fff" />
            </TrayIcon>
            <TrayIcon viewBox="0 0 16 17">
              <path d="M0 1h16v11H0z" fill="#111" />
              <path d="M2 9l3-5 2 3 2-2 4 4z" fill="#6aa8e0" />
              <path d="M5 12h6v2H5zM3 14h10v1H3z" fill="#ddd" />
            </TrayIcon>
            <TrayIcon viewBox="0 0 16 17">
              <path d="M1 12h2v3H1zM4.5 10h2v5h-2zM8 7h2v8H8zM11.5 3h2v12h-2z" fill="#fff" />
            </TrayIcon>
            <TrayIcon viewBox="0 0 16 17">
              <path d="M1 0v17" stroke="#fff" strokeWidth="1.6" />
              <path d="M2 1h9v8H2z" fill="#fff" />
              <circle cx="11" cy="12" r="4.5" fill="#c43a3a" />
              <path d="M9 10l4 4M13 10l-4 4" stroke="#fff" />
            </TrayIcon>
          </TrayIcons>
          <Clock>
            5:15 PM
            <br />
            3/20/2018
          </Clock>
        </Tray>
      </Taskbar>

      <Annotation $x={14} $y={175} $w={282} $h={82} />
      <Annotation $x={533} $y={175} $w={87} $h={68} />
      <Annotation $x={849} $y={176} $w={226} $h={74} />
    </Screen>
  )
}
